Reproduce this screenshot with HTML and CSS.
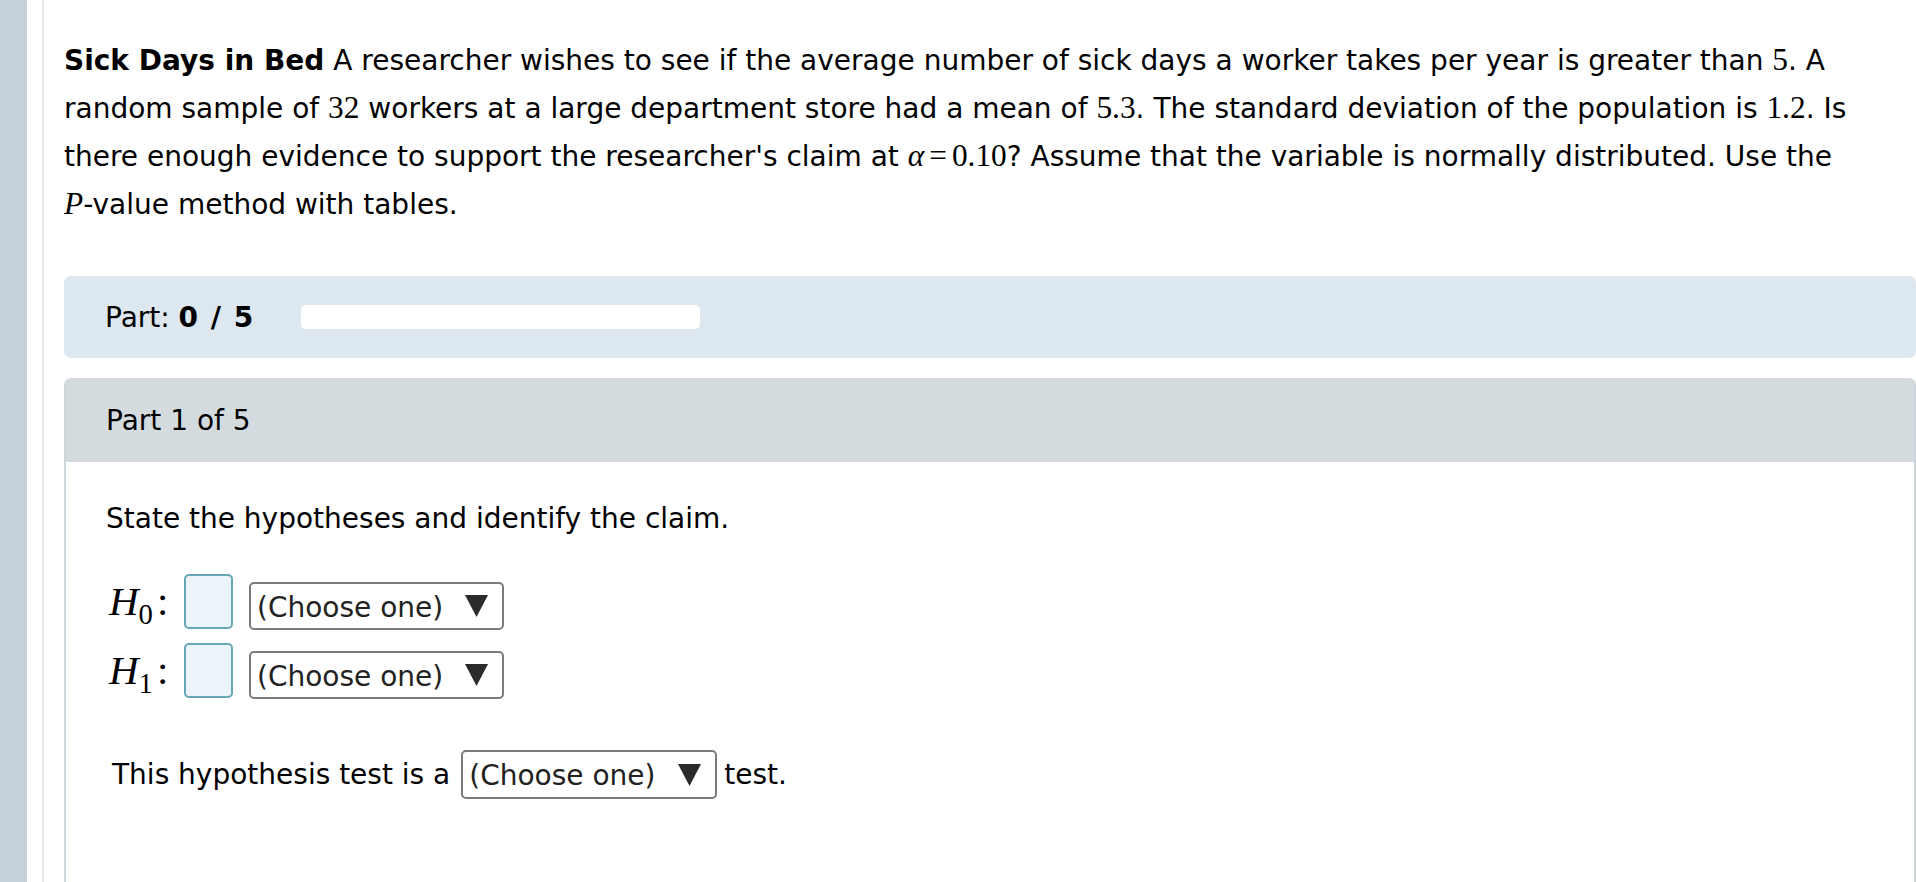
FILE: index.html
```html
<!DOCTYPE html>
<html lang="en">
<head>
<meta charset="utf-8">
<title>Sick Days in Bed</title>
<link rel="stylesheet" href="styles.css">
</head>
<body>
<div class="page">
  <aside class="sidebar"></aside>
  <main class="main">
    <p class="problem"><b>Sick Days in Bed</b> A researcher wishes to see if the average number of sick days a worker takes per year is greater than <span class="m">5</span>. A random sample of <span class="m">32</span> workers at a large department store had a mean of <span class="m">5.3</span>. The standard deviation of the population is <span class="m">1.2</span>. Is there enough evidence to support the researcher's claim at <span class="m"><i>α</i><span class="eq">=</span>0.10</span>? Assume that the variable is normally distributed. Use the <span class="nw"><span class="m"><i>P</i></span>-value</span> method with tables.</p>

    <div class="progress">
      <span class="progress-label">Part: <b>0 <span class="slash">/</span> 5</b></span>
      <span class="bar"></span>
    </div>

    <section class="part">
      <header class="part-head">Part 1 of 5</header>
      <div class="part-body">
        <p class="instr">State the hypotheses and identify the claim.</p>
        <div class="hyp">
          <div class="hyp-row">
            <span class="hlabel"><i>H</i><sub>0</sub><span class="colon">:</span></span>
            <span class="ans"></span>
            <span class="choose"><span>(Choose one)</span><svg class="tri" viewBox="0 0 23 22" width="23" height="22"><polygon points="0,0 23,0 11.5,22" /></svg></span>
          </div>
          <div class="hyp-row">
            <span class="hlabel"><i>H</i><sub>1</sub><span class="colon">:</span></span>
            <span class="ans"></span>
            <span class="choose"><span>(Choose one)</span><svg class="tri" viewBox="0 0 23 22" width="23" height="22"><polygon points="0,0 23,0 11.5,22" /></svg></span>
          </div>
        </div>
        <div class="test-row">
          <span>This hypothesis test is a</span>
          <span class="choose choose-test"><span>(Choose one)</span><svg class="tri" viewBox="0 0 23 22" width="23" height="22"><polygon points="0,0 23,0 11.5,22" /></svg></span>
          <span>test.</span>
        </div>
      </div>
    </section>
  </main>
</div>
</body>
</html>
```

FILE: styles.css
```css
html, body {
  margin: 0;
  height: 100%;
  overflow: hidden;
}

body {
  font-family: "DejaVu Sans", Verdana, sans-serif;
  font-size: 28px;
  color: #000;
  background: #fff;
}

.page {
  display: flex;
  height: 100vh;
}

.sidebar {
  flex: none;
  width: 27px;
  background: #c5d1d8;
}

.main {
  flex: 1;
  min-width: 0;
  display: flex;
  flex-direction: column;
  margin-left: 15px;
  border-left: 2px solid #e2e7ea;
  padding: 37px 0 0 20px;
}

.problem {
  margin: 0;
  line-height: 48px;
  padding-right: 8px;
}

.nw {
  white-space: nowrap;
}

.m {
  font-family: "Liberation Serif", "Times New Roman", serif;
  font-size: 1.12em;
  line-height: 1;
}

.eq {
  margin: 0 5px;
}

.progress {
  flex: none;
  display: flex;
  align-items: center;
  height: 82px;
  margin-top: 47px;
  padding-left: 41px;
  background: #dde7ef;
  border-radius: 7px;
}

.progress-label {
  min-width: 154px;
}

.slash {
  margin: 0 3px;
}

.bar {
  width: 399px;
  height: 24px;
  margin-left: 42px;
  background: #fff;
  border-radius: 5px;
}

.part {
  flex: 1;
  margin-top: 20px;
  border-left: 2px solid #ccd5da;
  border-right: 2px solid #ccd5da;
  border-radius: 7px 7px 0 0;
  overflow: hidden;
}

.part-head {
  display: flex;
  align-items: center;
  height: 84px;
  padding-left: 40px;
  background: #d3dbdf;
}

.part-body {
  padding: 33px 0 0 40px;
}

.instr {
  margin: 0;
  line-height: 48px;
}

.hyp {
  display: flex;
  flex-direction: column;
  gap: 14px;
  margin-top: 31px;
}

.hyp-row {
  display: flex;
  align-items: flex-end;
}

.hlabel {
  width: 78px;
  align-self: center;
  font-family: "Liberation Serif", "Times New Roman", serif;
  font-size: 41px;
  line-height: 1;
  padding-left: 3px;
  box-sizing: border-box;
}

.hlabel sub {
  font-size: 0.7em;
  vertical-align: -0.32em;
  line-height: 0;
}

.colon {
  margin-left: 4px;
}

.ans {
  flex: none;
  width: 49px;
  height: 55px;
  box-sizing: border-box;
  margin-right: 16px;
  border: 2px solid #67a6b6;
  border-radius: 5px;
  background: #eaf4f9;
}

.choose {
  flex: none;
  display: inline-flex;
  align-items: center;
  justify-content: space-between;
  width: 255px;
  height: 48px;
  box-sizing: border-box;
  padding: 2px 14px 0 6px;
  border: 2px solid #7b7b7b;
  border-radius: 5px;
  background: #fff;
  color: #222;
  margin-bottom: -1px;
}

.tri {
  fill: #2b2b2b;
  margin-top: -2px;
}

.test-row {
  display: flex;
  align-items: center;
  margin-top: 52px;
  padding-left: 6px;
}

.choose-test {
  width: 256px;
  height: 49px;
  margin: 0 7px 0 11px;
}
```
